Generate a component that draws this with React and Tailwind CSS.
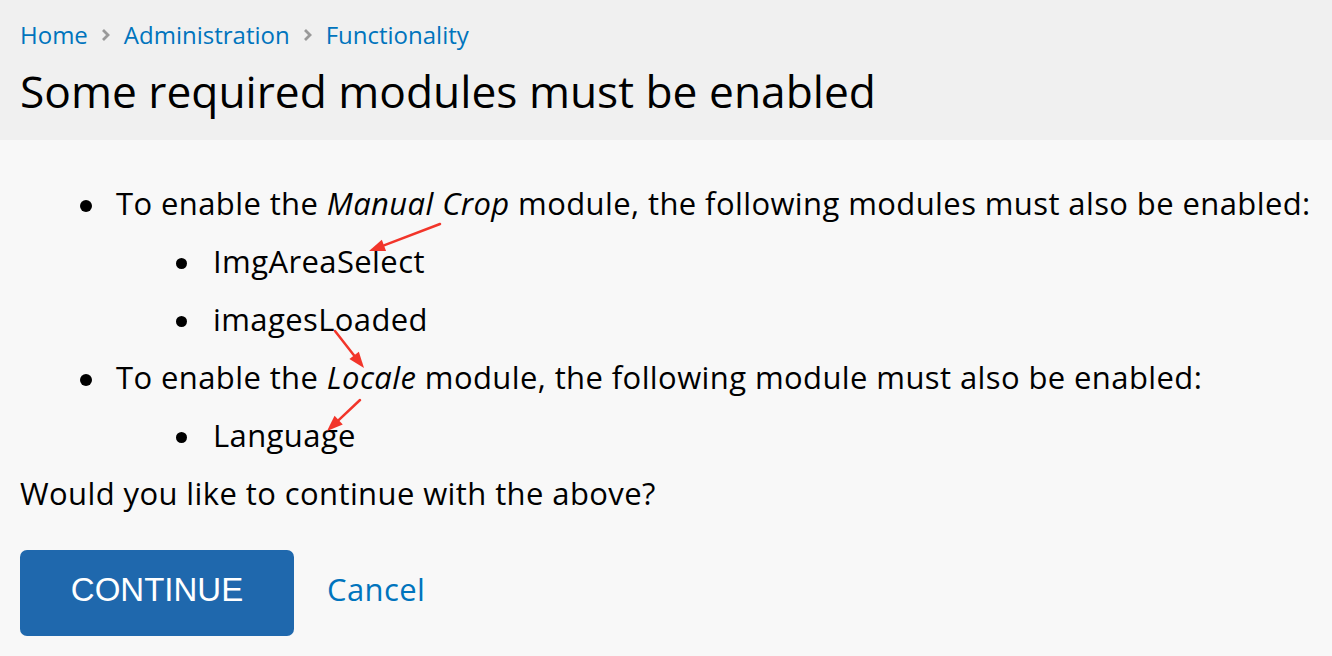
function Chevron() {
  return (
    <svg width="10" height="14" viewBox="0 0 10 14" className="mx-[13px] shrink-0">
      <path d="M2 2l5 5-5 5" fill="none" stroke="#999" strokeWidth="2.8" />
    </svg>
  );
}

function Arrow({ x1, y1, x2, y2 }) {
  const a = Math.atan2(y2 - y1, x2 - x1);
  const len = 16;
  const w = 6;
  const bx = x2 - len * Math.cos(a);
  const by = y2 - len * Math.sin(a);
  const px = -Math.sin(a) * w;
  const py = Math.cos(a) * w;
  return (
    <g>
      <line x1={x1} y1={y1} x2={bx} y2={by} stroke="#f2352a" strokeWidth="2.5" strokeLinecap="round" />
      <polygon points={`${x2},${y2} ${bx + px},${by + py} ${bx - px},${by - py}`} fill="#f2352a" />
    </g>
  );
}

function Item({ children }) {
  return (
    <li className="flex items-start pl-[60px] whitespace-nowrap">
      <span className="mt-[26px] w-[12px] h-[12px] rounded-full bg-black shrink-0" />
      <span className="ml-[24px]">{children}</span>
    </li>
  );
}

function SubItem({ children }) {
  return (
    <li className="flex items-start pl-[156px] whitespace-nowrap">
      <span className="mt-[26px] w-[11px] h-[11px] rounded-full bg-black shrink-0" />
      <span className="ml-[26px]">{children}</span>
    </li>
  );
}

export default function App() {
  return (
    <div className="relative w-[1332px] h-[656px] bg-[#f8f8f8] text-black overflow-hidden font-['Open_Sans',sans-serif]">
      <header className="bg-[#f0f0f0] h-[140px] px-5 pt-[14px]">
        <nav className="flex items-center text-[24px] leading-[42px] text-[#0074bd]">
          <a>Home</a>
          <Chevron />
          <a>Administration</a>
          <Chevron />
          <a>Functionality</a>
        </nav>
        <h1 className="text-[44.3px] leading-[70px] font-normal whitespace-nowrap">Some required modules must be enabled</h1>
      </header>

      <main className="px-5 pt-[34px] text-[31px] leading-[58px] tracking-[0.4px]">
        <ul>
          <Item>
            To enable the <em>Manual Crop</em> module, the following modules must also be enabled:
          </Item>
          <SubItem>ImgAreaSelect</SubItem>
          <SubItem>imagesLoaded</SubItem>
          <Item>
            To enable the <em>Locale</em> module, the following module must also be enabled:
          </Item>
          <SubItem>Language</SubItem>
        </ul>
        <p className="whitespace-nowrap">Would you like to continue with the above?</p>
        <div className="flex items-center mt-[28px]">
          <button className="w-[274px] h-[86px] pb-[6px] rounded-[7px] bg-[#1f68ad] text-white text-[33px] tracking-normal font-['Liberation_Sans',Arial,sans-serif]">
            CONTINUE
          </button>
          <a className="ml-[33px] mb-[8px] text-[#0074bd]">Cancel</a>
        </div>
      </main>

      <svg className="absolute inset-0 pointer-events-none" width="1332" height="656">
        <Arrow x1={440} y1={224} x2={369} y2={251} />
        <Arrow x1={335} y1={331} x2={364} y2={368} />
        <Arrow x1={360} y1={400} x2={327} y2={431} />
      </svg>
    </div>
  );
}
